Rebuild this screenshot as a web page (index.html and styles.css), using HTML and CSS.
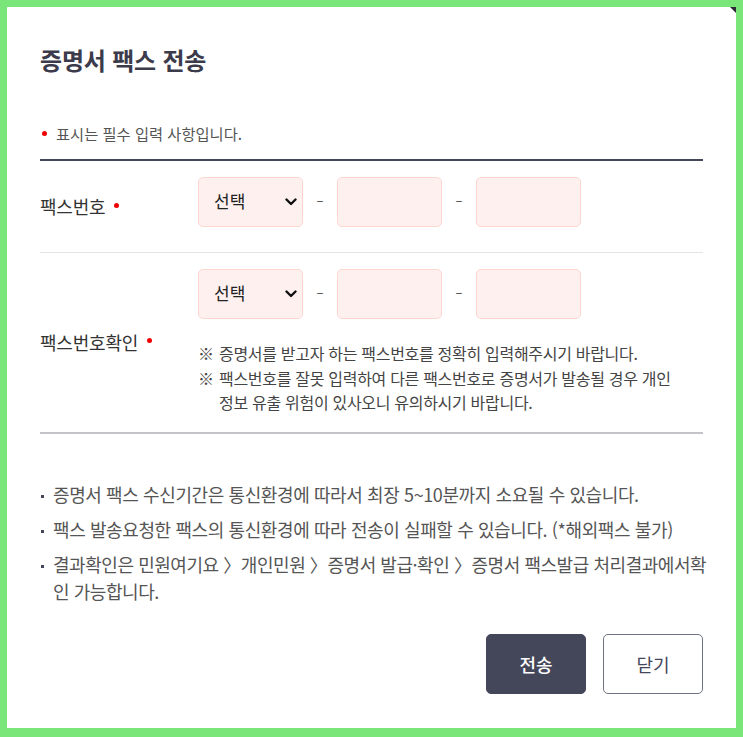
FILE: index.html
```html
<!DOCTYPE html>
<html lang="ko">
<head>
<meta charset="utf-8">
<title>증명서 팩스 전송</title>
<link rel="stylesheet" href="styles.css">
</head>
<body>
<div class="modal">
  <span class="corner"></span>
  <h1 class="title">증명서 팩스 전송</h1>
  <p class="req-note"><span class="dot"></span>표시는 필수 입력 사항입니다.</p>
  <div class="form">
    <div class="row row-first">
      <div class="label">팩스번호<span class="dot"></span></div>
      <div class="field">
        <div class="phone">
          <span class="sel-wrap">
            <select class="sel"><option>선택</option></select>
            <svg class="chev" width="12" height="8" viewBox="0 0 12 8"><path d="M1.5 1.5 L6 6 L10.5 1.5" fill="none" stroke="#111" stroke-width="2.4" stroke-linecap="round" stroke-linejoin="round"/></svg>
          </span>
          <span class="dash">–</span>
          <input class="inp" type="text">
          <span class="dash">–</span>
          <input class="inp" type="text">
        </div>
      </div>
    </div>
    <div class="row row-second">
      <div class="label">팩스번호확인<span class="dot"></span></div>
      <div class="field">
        <div class="phone">
          <span class="sel-wrap">
            <select class="sel"><option>선택</option></select>
            <svg class="chev" width="12" height="8" viewBox="0 0 12 8"><path d="M1.5 1.5 L6 6 L10.5 1.5" fill="none" stroke="#111" stroke-width="2.4" stroke-linecap="round" stroke-linejoin="round"/></svg>
          </span>
          <span class="dash">–</span>
          <input class="inp" type="text">
          <span class="dash">–</span>
          <input class="inp" type="text">
        </div>
        <ul class="notes">
          <li><span class="mark">※</span><span class="note-text">증명서를 받고자 하는 팩스번호를 정확히 입력해주시기 바랍니다.</span></li>
          <li><span class="mark">※</span><span class="note-text">팩스번호를 잘못 입력하여 다른 팩스번호로 증명서가 발송될 경우 개인 정보 유출 위험이 있사오니 유의하시기 바랍니다.</span></li>
        </ul>
      </div>
    </div>
  </div>
  <ul class="info">
    <li>증명서 팩스 수신기간은 통신환경에 따라서 최장 5~10분까지 소요될 수 있습니다.</li>
    <li>팩스 발송요청한 팩스의 통신환경에 따라 전송이 실패할 수 있습니다. (*해외팩스 불가)</li>
    <li class="wide">결과확인은 민원여기요 〉개인민원 〉증명서 발급·확인 〉증명서 팩스발급 처리결과에서확인 가능합니다.</li>
  </ul>
  <div class="actions">
    <button class="btn btn-primary" type="button">전송</button>
    <button class="btn btn-outline" type="button">닫기</button>
  </div>
</div>
</body>
</html>
```
FILE: styles.css
```css
* { box-sizing: border-box; }
html, body { margin: 0; padding: 0; }
body {
  background: #7ae67a;
  padding: 7px;
  font-family: "Noto Sans CJK KR", "Noto Sans", sans-serif;
  color: #333;
}
.modal {
  position: relative;
  background: #fff;
  width: 729px;
  height: 721px;
  padding: 35px 33px 0 33px;
}
.corner {
  position: absolute;
  top: 0;
  right: 0;
  width: 0;
  height: 0;
  border-top: 6px solid #2b2b33;
  border-left: 6px solid transparent;
}
.title {
  margin: 0;
  font-size: 24px;
  line-height: 36px;
  font-weight: 700;
  color: #3b3b4b;
  letter-spacing: -0.2px;
}
.req-note {
  margin: 45px 0 0 0;
  font-size: 15.3px;
  line-height: 20px;
  color: #555;
  display: flex;
  align-items: center;
  letter-spacing: 0;
}
.req-note .dot { margin: 0 9px 0 2px; }
.dot {
  display: inline-block;
  width: 5px;
  height: 5px;
  border-radius: 50%;
  background: #f00000;
}
.form {
  margin-top: 16px;
  border-top: 2px solid #444659;
  border-bottom: 2px solid #c2c4c8;
}
.row {
  display: flex;
  align-items: stretch;
}
.row-first {
  border-bottom: 1px solid #e4e4e6;
  padding: 16px 0 25px;
}
.row-second {
  padding: 16px 0 17px;
}
.label {
  width: 158px;
  flex: none;
  display: flex;
  align-items: center;
  font-size: 18px;
  color: #333;
  letter-spacing: -0.2px;
}
.label .dot { margin-left: 9px; margin-top: -2px; }
.row-first .label { margin-bottom: -8px; }
.field { flex: 1; }
.phone {
  display: flex;
  align-items: center;
}
.sel-wrap {
  position: relative;
  display: inline-block;
  width: 105px;
  height: 50px;
}
.sel {
  appearance: none;
  -webkit-appearance: none;
  width: 100%;
  height: 100%;
  border: 1px solid #fcd7d0;
  border-radius: 5px;
  background: #fff0f0;
  padding: 0 0 3px 15px;
  font-family: inherit;
  font-size: 17px;
  color: #222;
  outline: none;
}
.chev {
  position: absolute;
  right: 6px;
  top: 21px;
  pointer-events: none;
}
.inp {
  width: 105px;
  height: 50px;
  border: 1px solid #fcd7d0;
  border-radius: 5px;
  background: #fff0f0;
  outline: none;
  padding: 0 10px;
}
.dash {
  width: 34px;
  text-align: center;
  font-size: 13px;
  color: #444;
  margin-top: -6px;
}
.notes {
  list-style: none;
  margin: 22px 0 0 0;
  padding: 0;
  font-size: 16px;
  line-height: 24.5px;
  color: #444;
  letter-spacing: -0.3px;
}
.notes li {
  display: flex;
}
.notes .mark {
  flex: none;
  width: 21px;
}
.note-text { width: 452px; }
.info {
  list-style: none;
  margin: 47px 0 0 0;
  padding: 0;
  font-size: 18px;
  line-height: 27px;
  color: #555;
  letter-spacing: -0.4px;
  word-break: break-all;
}
.info li {
  position: relative;
  padding-left: 13px;
  margin-bottom: 8px;
}
.info li.wide {
  margin-right: -9px;
  letter-spacing: -0.45px;
}
.info li::before {
  content: "";
  position: absolute;
  left: 1px;
  top: 14px;
  width: 3px;
  height: 3px;
  background: #444659;
}
.actions {
  display: flex;
  justify-content: flex-end;
  gap: 17px;
  margin-top: 29px;
}
.btn {
  width: 100px;
  height: 60px;
  border-radius: 5px;
  font-family: inherit;
  font-size: 18px;
  font-weight: 500;
  cursor: pointer;
}
.btn-primary {
  background: #444659;
  border: 1px solid #444659;
  color: #fff;
}
.btn-outline {
  background: #fff;
  border: 1px solid #6e7282;
  color: #444659;
  font-weight: 400;
}
```
